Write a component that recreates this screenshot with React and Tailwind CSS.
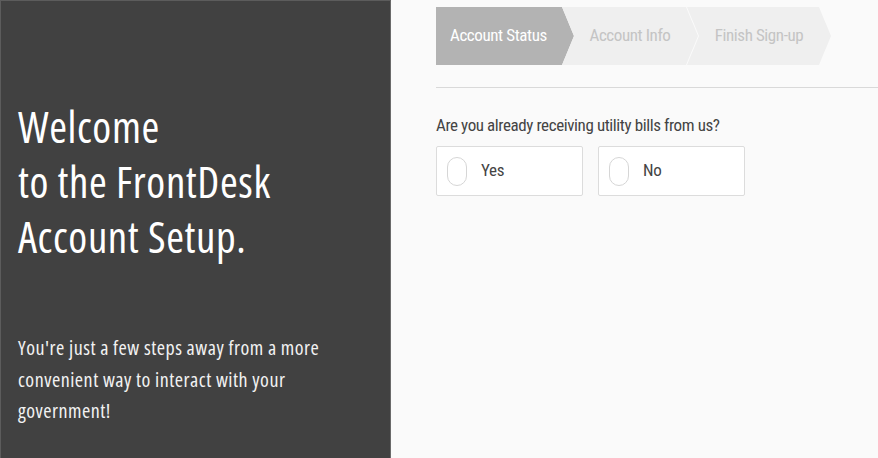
import React from "react";

function Radio({ label }) {
  return (
    <div className="w-[147px] h-[50px] bg-white border border-[#dcdcdc] rounded-[2px] flex items-center pl-[10px] gap-[14px]">
      <span className="w-[20px] h-[29px] rounded-full border border-[#d6d6d6] bg-white"></span>
      <span className="text-[17px] tracking-[-0.3px] text-[#444] font-stretch-condensed">{label}</span>
    </div>
  );
}

const arrow =
  "[clip-path:polygon(0_0,calc(100%-12px)_0,100%_50%,calc(100%-12px)_100%,0_100%,12px_50%)]";

export default function App() {
  return (
    <div className="w-[878px] h-[458px] flex overflow-hidden bg-[#fafafa] font-['Roboto',sans-serif]">
      <div className="w-[391px] h-full bg-[#414141] border-l border-t border-[#5c5c5c] border-r border-r-[#6a6a6a] pl-[17px] pt-[98px] text-white font-['Open_Sans',sans-serif]">
        <h1 className="text-[43px] leading-[55px] tracking-[0.6px] font-stretch-condensed">
          Welcome
          <br />
          to the FrontDesk
          <br />
          Account Setup.
        </h1>
        <p className="mt-[68px] text-[20px] leading-[31.5px] tracking-[0.5px] text-[#f2f2f2] font-stretch-condensed w-[325px]">
          You're just a few steps away from a more convenient way to interact with your government!
        </p>
      </div>
      <div className="flex-1 pl-[45px] pt-[7px]">
        <div className="flex">
          <div className="h-[58px] w-[138px] bg-[#b3b3b3] text-white flex items-center pl-[14px] [clip-path:polygon(0_0,calc(100%-12px)_0,100%_50%,calc(100%-12px)_100%,0_100%)]">
            <span className="text-[17px] tracking-[-0.4px] font-stretch-condensed">Account Status</span>
          </div>
          <div className={`h-[58px] w-[136px] -ml-[12px] bg-[#efefef] text-[#c4c4c4] flex items-center justify-center ${arrow}`}>
            <span className="text-[17px] tracking-[-0.4px] font-stretch-condensed">Account Info</span>
          </div>
          <div className={`h-[58px] w-[144px] -ml-[11px] bg-[#efefef] text-[#c4c4c4] flex items-center justify-center ${arrow}`}>
            <span className="text-[17px] tracking-[-0.4px] font-stretch-condensed">Finish Sign-up</span>
          </div>
        </div>
        <div className="mt-[22px] h-px bg-[#d9d9d9]"></div>
        <p className="mt-[27px] text-[17px] leading-[20px] tracking-[-0.4px] text-[#444] font-stretch-condensed">
          Are you already receiving utility bills from us?
        </p>
        <div className="mt-[11px] flex gap-[15px]">
          <Radio label="Yes" />
          <Radio label="No" />
        </div>
      </div>
    </div>
  );
}
